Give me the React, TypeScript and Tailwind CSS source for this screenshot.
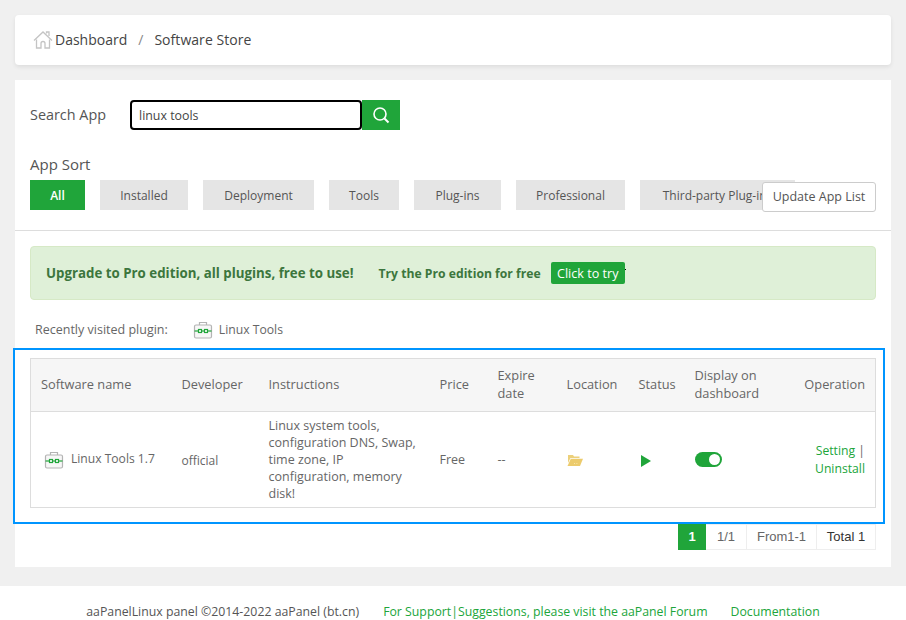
const tabs = [
  { label: 'Installed', w: 'w-[88px]' },
  { label: 'Deployment', w: 'w-[111px]' },
  { label: 'Tools', w: 'w-[70px]' },
  { label: 'Plug-ins', w: 'w-[87px]' },
  { label: 'Professional', w: 'w-[109px]' },
  { label: 'Third-party Plug-ins', w: 'w-[155px]' },
];

function HomeIcon() {
  return (
    <svg width="20" height="20" viewBox="0 0 20 20" fill="none" stroke="#c4c4c4" strokeWidth="1.3" className="shrink-0">
      <path d="M1 10.5 10 2l9 8.5" />
      <path d="M13.5 3.5V2H16v4" />
      <path d="M3.5 9.5V18H8v-4.5a2 2 0 0 1 4 0V18h4.500V9.500" />
    </svg>
  );
}

function SearchIcon() {
  return (
    <svg width="18" height="18" viewBox="0 0 18 18" fill="none" stroke="#fff" strokeWidth="1.6">
      <circle cx="8" cy="8" r="6" />
      <path d="M12.500 12.500 16.500 16.500" strokeWidth="2" />
    </svg>
  );
}

function ToolboxIcon() {
  return (
    <svg width="20" height="20" viewBox="0 0 20 20" fill="none" className="shrink-0">
      <path d="M6.500 5V2.500h7V5" stroke="#b4b4b4" strokeWidth="1.200" />
      <rect x="1.500" y="5" width="17" height="13" rx="1.500" fill="#f7f7f7" stroke="#b4b4b4" strokeWidth="1.200" />
      <path d="M1.500 11h17" stroke="#20a53a" strokeWidth="1.200" />
      <rect x="5.500" y="9.500" width="3" height="3" fill="#fff" stroke="#20a53a" strokeWidth="1.200" />
      <rect x="11.500" y="9.500" width="3" height="3" fill="#fff" stroke="#20a53a" strokeWidth="1.200" />
    </svg>
  );
}

function FolderIcon() {
  return (
    <svg width="16" height="12" viewBox="0 0 16 12" className="block">
      <path d="M1 1h5l1 1.500h5.500V4H3.500L1 9z" fill="#ecd07a" />
      <path d="M3.800 4.800H16L13 12H0.500z" fill="#eccb6c" />
      <path d="M7 9.500h.8M9.500 9.500h.8" stroke="#fff3c8" strokeWidth="0.800" />
    </svg>
  );
}

export default function App() {
  return (
    <div className="min-h-[620px] bg-[#f0f0f0] font-['Open_Sans','Noto_Sans',sans-serif] text-[#555] overflow-hidden">
      <div className="px-[15px] pt-[15px]">
        <div className="h-[50px] bg-white rounded-[4px] shadow-[0_2px_4px_rgba(0,0,0,0.08)] flex items-center pl-[18px] text-[14px] text-[#444]">
          <HomeIcon />
          <span className="ml-[2px] pb-[2px]">Dashboard</span>
          <span className="mx-[11px] pb-[2px] text-[#888]">/</span>
          <span className="pb-[2px] tracking-[0.05px]">Software Store</span>
        </div>

        <div className="relative mt-[15px] h-[487px] bg-white">
          <div className="px-[15px] pt-[20px]">
            <div className="flex items-center h-[30px]">
              <span className="w-[100px] pb-[1px] text-[14.4px] text-[#555]">Search App</span>
              <div className="w-[232px] h-[30px] border-2 border-black rounded-[4px] pl-[7px] pt-[2px] flex items-center text-[12.4px] text-[#444]">
                linux tools
              </div>
              <div className="w-[38px] h-[30px] bg-[#20a53a] flex items-center justify-center">
                <SearchIcon />
              </div>
            </div>
            <div className="mt-[24px] h-[20px] leading-[20px] text-[15px] text-[#555]">App Sort</div>
            <div className="mt-[6px] flex gap-[15px] text-[12px]">
              <div className="w-[55px] h-[30px] pt-[1px] bg-[#20a53a] text-white font-semibold flex items-center justify-center">All</div>
              {tabs.map((t) => (
                <div key={t.label} className={`${t.w} h-[30px] pt-[1px] bg-[#e5e5e5] text-[#555] flex items-center justify-center whitespace-nowrap`}>
                  {t.label}
                </div>
              ))}
            </div>
          </div>

          <div className="absolute left-[747px] top-[102px] w-[114px] h-[30px] bg-white border border-[#ccc] rounded-[3px] flex items-center justify-center text-[12.500px] text-[#555]">
            Update App List
          </div>

          <div className="mt-[20px] border-t border-[#ddd]" />

          <div className="mx-[15px] mt-[15px] h-[54px] bg-[#dff0d8] border border-[#d6e9c6] rounded-[4px] flex items-center pl-[15px] text-[12.200px] font-bold text-[#3c763d]">
            <span className="pt-[1px] text-[13.300px]">Upgrade to Pro edition, all plugins, free to use!</span>
            <span className="ml-[25px] pt-[2px]">Try the Pro edition for free</span>
            <span className="relative ml-[10px] w-[74px] h-[22px] pt-[2px] bg-[#20a53a] rounded-[2px] text-[12.600px] text-white font-normal flex items-center justify-center">
              Click to try
              <span className="absolute left-[74px] top-[7px] w-[1px] h-[1px] bg-black" />
            </span>
          </div>

          <div className="mx-[20px] mt-[21px] h-[18px] flex items-center text-[12.500px] text-[#666]">
            <span>Recently visited plugin:</span>
            <span className="ml-[25px]"><ToolboxIcon /></span>
            <span className="ml-[6px] text-[12.200px]">Linux Tools</span>
          </div>

          <div className="mx-[15px] mt-[19px]">
            <table className="w-[846px] table-fixed border-collapse border border-[#ddd] text-[12.500px] text-[#666]">
              <thead>
                <tr className="h-[53px] bg-[#f6f6f6] border-b border-[#ddd] text-left leading-[18px] text-[12.800px]">
                  <th className="w-[141px] px-[10px] pb-[2px] font-normal whitespace-nowrap">Software name</th>
                  <th className="w-[87px] px-[10px] pb-[2px] font-normal">Developer</th>
                  <th className="w-[171px] px-[10px] pb-[2px] font-normal">Instructions</th>
                  <th className="w-[58px] px-[10px] pb-[2px] font-normal">Price</th>
                  <th className="w-[69px] px-[10px] pb-[2px] font-normal">Expire date</th>
                  <th className="w-[72px] px-[10px] pb-[2px] font-normal whitespace-nowrap">Location</th>
                  <th className="w-[56px] px-[10px] pb-[2px] font-normal">Status</th>
                  <th className="w-[95px] px-[10px] pb-[2px] font-normal">Display on dashboard</th>
                  <th className="px-[10px] pb-[2px] font-normal text-right">Operation</th>
                </tr>
              </thead>
              <tbody>
                <tr className="h-[96px]">
                  <td className="px-[13px]">
                    <div className="flex items-center gap-[7px] whitespace-nowrap">
                      <ToolboxIcon />
                      <span className="text-[12.100px]">Linux Tools 1.7</span>
                    </div>
                  </td>
                  <td className="px-[10px] pt-[2px] text-[12px]">official</td>
                  <td className="px-[10px] leading-[17px]">Linux system tools, configuration DNS, Swap, time zone, IP configuration, memory disk!</td>
                  <td className="px-[10px] pt-[2px]">Free</td>
                  <td className="px-[10px] pt-[2px]">--</td>
                  <td className="px-[10px]"><FolderIcon /></td>
                  <td className="px-[10px]">
                    <div className="ml-[2px] mt-[3px] w-0 h-0 border-y-[6px] border-y-transparent border-l-[10px] border-l-[#20a53a]" />
                  </td>
                  <td className="px-[10px]">
                    <div className="w-[27px] h-[15px] rounded-full bg-[#20a53a] relative">
                      <div className="absolute right-[2px] top-[2px] w-[11px] h-[11px] rounded-full bg-white" />
                    </div>
                  </td>
                  <td className="px-[10px] text-right text-[12.200px] text-[#20a53a] leading-[18px]">
                    Setting <span className="text-[#666]">|</span> Uninstall
                  </td>
                </tr>
              </tbody>
            </table>
          </div>

          <div className="mx-[15px] mt-[16px] flex justify-end text-[13px] font-['Liberation_Sans',sans-serif] text-[#666]">
            <div className="w-[28px] h-[26px] bg-[#20a53a] text-white font-bold flex items-center justify-center">1</div>
            <div className="w-[41px] h-[26px] border-y border-r border-[#eee] flex items-center justify-center">1/1</div>
            <div className="w-[70px] h-[26px] border-y border-r border-[#eee] flex items-center justify-center">From1-1</div>
            <div className="w-[59px] h-[26px] border-y border-r border-[#eee] text-[#333] flex items-center justify-center">Total 1</div>
          </div>

          {/* highlight frame around the table */}
          <div className="absolute left-[-2px] top-[268px] w-[872px] h-[176px] border-2 border-[#0095ff] pointer-events-none" />
        </div>
      </div>

      <div className="mt-[19px] h-[40px] bg-white flex items-center justify-center text-[12.300px] text-[#555] whitespace-nowrap pt-[13px]">
        <span>aaPanelLinux panel ©2014-2022 aaPanel (bt.cn)</span>
        <span className="ml-[24px] text-[#20a53a]">For Support|Suggestions, please visit the aaPanel Forum</span>
        <span className="ml-[23px] text-[#20a53a]">Documentation</span>
      </div>
    </div>
  );
}
